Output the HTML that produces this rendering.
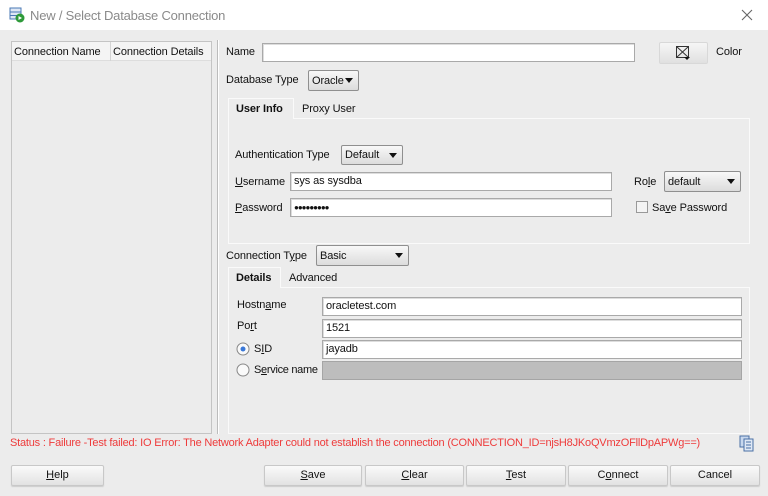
<!DOCTYPE html>
<html><head><style>
*{box-sizing:border-box;margin:0;padding:0}
body{width:768px;height:496px;background:#ececec;font-family:"Liberation Sans",sans-serif;font-size:11px;color:#111;position:relative;overflow:hidden}
.a{position:absolute}
.t{position:absolute;white-space:nowrap;line-height:12px;letter-spacing:-0.1px}
.in{position:absolute;background:#fff;border:1px solid #a9a9a9;box-shadow:inset 1px 1px 0 #ddd;padding-left:3px;line-height:17px;font-size:11px;letter-spacing:-0.1px}
.cb{position:absolute;border:1px solid #8f8f8f;border-radius:2px;background:linear-gradient(#f8f8f8,#dcdcdc);padding-left:3px;letter-spacing:-0.1px}
.cb:after{content:"";position:absolute;right:5px;top:7px;border-left:4px solid transparent;border-right:4px solid transparent;border-top:5px solid #111}
.btn{position:absolute;top:465px;height:21px;border:1px solid #c8c8c8;border-radius:2px;background:linear-gradient(#fafafa,#e2e2e2);text-align:center;line-height:19px;box-shadow:0 1px 1px #ccc}
u{text-decoration:underline}
</style></head><body>
<div class="a" style="left:0;top:0;width:768px;height:30px;background:#fff"></div>
<svg class="a" style="left:9px;top:7px" width="16" height="16"><rect x="1" y="1" width="11" height="11" fill="#dfe8f5" stroke="#4a78b5"/><line x1="1" y1="5" x2="12" y2="5" stroke="#4a78b5"/><line x1="1" y1="8.5" x2="12" y2="8.5" stroke="#4a78b5"/><circle cx="11" cy="11" r="4.5" fill="#2e9a3a"/><path d="M9.5 9 L13 11 L9.5 13Z" fill="#fff"/></svg>
<div class="t" style="left:30px;top:8px;font-size:13px;line-height:15px;color:#8a8a8a;letter-spacing:-0.2px">New / Select Database Connection</div>
<svg class="a" style="left:741px;top:9px" width="12" height="12"><path d="M1 1L11 11M11 1L1 11" stroke="#666" stroke-width="1.1"/></svg>

<div class="a" style="left:11px;top:41px;width:201px;height:393px;border:1px solid #c4c4c4;background:#ececec"></div>
<div class="a" style="left:12px;top:42px;width:199px;height:19px;background:#f4f4f4;border-bottom:1px solid #ddd"></div>
<div class="a" style="left:110px;top:42px;width:1px;height:19px;background:#d4d4d4"></div>
<div class="t" style="left:14px;top:46px">Connection Name</div>
<div class="t" style="left:113px;top:46px">Connection Details</div>
<div class="a" style="left:217px;top:40px;width:1px;height:394px;background:#bcbcbc"></div>
<div class="a" style="left:218px;top:40px;width:1px;height:394px;background:#fff"></div>

<div class="t" style="left:226px;top:46px">Name</div>
<div class="in" style="left:262px;top:43px;width:373px;height:19px"></div>
<div class="a" style="left:659px;top:42px;width:49px;height:22px;border:1px solid #d8d8d8;border-radius:2px;background:linear-gradient(#f6f6f6,#e0e0e0)"></div>
<svg class="a" style="left:675px;top:45px" width="18" height="16"><rect x="1.5" y="1.5" width="12" height="11" fill="none" stroke="#333"/><path d="M1.5 1.5L13.5 12.5M13.5 1.5L1.5 12.5" stroke="#333"/><path d="M9 12L15 12L12 15Z" fill="#111"/></svg>
<div class="t" style="left:716px;top:46px">Color</div>

<div class="t" style="left:226px;top:74px">Database Type</div>
<div class="cb" style="left:308px;top:70px;width:51px;height:21px;line-height:20px">Oracle</div>

<div class="a" style="left:228px;top:118px;width:522px;height:126px;border:1px solid #fafafa"></div>
<div class="a" style="left:228px;top:98px;width:66px;height:21px;border:1px solid #fafafa;border-bottom:none;background:#ececec"></div>
<div class="t" style="left:236px;top:103px;font-weight:bold">User Info</div>
<div class="t" style="left:302px;top:103px">Proxy User</div>

<div class="t" style="left:235px;top:149px">Authentication Type</div>
<div class="cb" style="left:341px;top:145px;width:62px;height:20px;line-height:19px">Default</div>
<div class="t" style="left:235px;top:176px"><u>U</u>sername</div>
<div class="in" style="left:290px;top:172px;width:322px;height:19px">sys as sysdba</div>
<div class="t" style="left:634px;top:176px">Ro<u>l</u>e</div>
<div class="cb" style="left:664px;top:171px;width:77px;height:21px;line-height:21px">default</div>
<div class="t" style="left:235px;top:202px"><u>P</u>assword</div>
<div class="in" style="left:290px;top:198px;width:322px;height:19px;font-size:8px;letter-spacing:-1px;font-weight:bold">●●●●●●●●●</div>
<div class="a" style="left:636px;top:201px;width:12px;height:12px;border:1px solid #999;background:#f4f4f4"></div>
<div class="t" style="left:652px;top:202px">Sa<u>v</u>e Password</div>

<div class="t" style="left:226px;top:250px">Connection T<u>y</u>pe</div>
<div class="cb" style="left:316px;top:245px;width:93px;height:21px;line-height:21px">Basic</div>

<div class="a" style="left:228px;top:287px;width:522px;height:147px;border:1px solid #fafafa"></div>
<div class="a" style="left:228px;top:267px;width:53px;height:21px;border:1px solid #fafafa;border-bottom:none;background:#ececec"></div>
<div class="t" style="left:236px;top:272px;font-weight:bold">Details</div>
<div class="t" style="left:289px;top:272px">Advanced</div>

<div class="t" style="left:237px;top:299px">Hostn<u>a</u>me</div>
<div class="in" style="left:322px;top:297px;width:420px;height:19px">oracletest.com</div>
<div class="t" style="left:237px;top:320px">Po<u>r</u>t</div>
<div class="in" style="left:322px;top:319px;width:420px;height:19px">1521</div>
<svg class="a" style="left:236px;top:342px" width="14" height="14"><circle cx="7" cy="7" r="6" fill="#fafafa" stroke="#888"/><circle cx="7" cy="7" r="2.5" fill="#3a78d8"/></svg>
<div class="t" style="left:254px;top:343px">S<u>I</u>D</div>
<div class="in" style="left:322px;top:340px;width:420px;height:19px">jayadb</div>
<svg class="a" style="left:236px;top:363px" width="14" height="14"><circle cx="7" cy="7" r="6" fill="#fafafa" stroke="#888"/></svg>
<div class="t" style="left:254px;top:364px;letter-spacing:-0.3px">S<u>e</u>rvice name</div>
<div class="a" style="left:322px;top:361px;width:420px;height:19px;background:#bdbdbd;border:1px solid #a5a5a5"></div>

<div class="t" style="left:10px;top:437px;color:#ee3b3b;letter-spacing:-0.2px">Status : Failure -Test failed: IO Error: The Network Adapter could not establish the connection (CONNECTION_ID=njsH8JKoQVmzOFllDpAPWg==)</div>
<svg class="a" style="left:739px;top:435px" width="16" height="17"><rect x="1" y="1" width="9" height="11" fill="#c8d8ee" stroke="#4a6fa5"/><rect x="5" y="4" width="9" height="12" fill="#dfe8f5" stroke="#4a6fa5"/><path d="M7 7H12M7 10H12M7 13H12" stroke="#4a6fa5"/></svg>

<div class="btn" style="left:11px;width:93px"><u>H</u>elp</div>
<div class="btn" style="left:264px;width:98px"><u>S</u>ave</div>
<div class="btn" style="left:365px;width:99px"><u>C</u>lear</div>
<div class="btn" style="left:466px;width:100px"><u>T</u>est</div>
<div class="btn" style="left:568px;width:100px">C<u>o</u>nnect</div>
<div class="btn" style="left:670px;width:90px">Cancel</div>
</body></html>
